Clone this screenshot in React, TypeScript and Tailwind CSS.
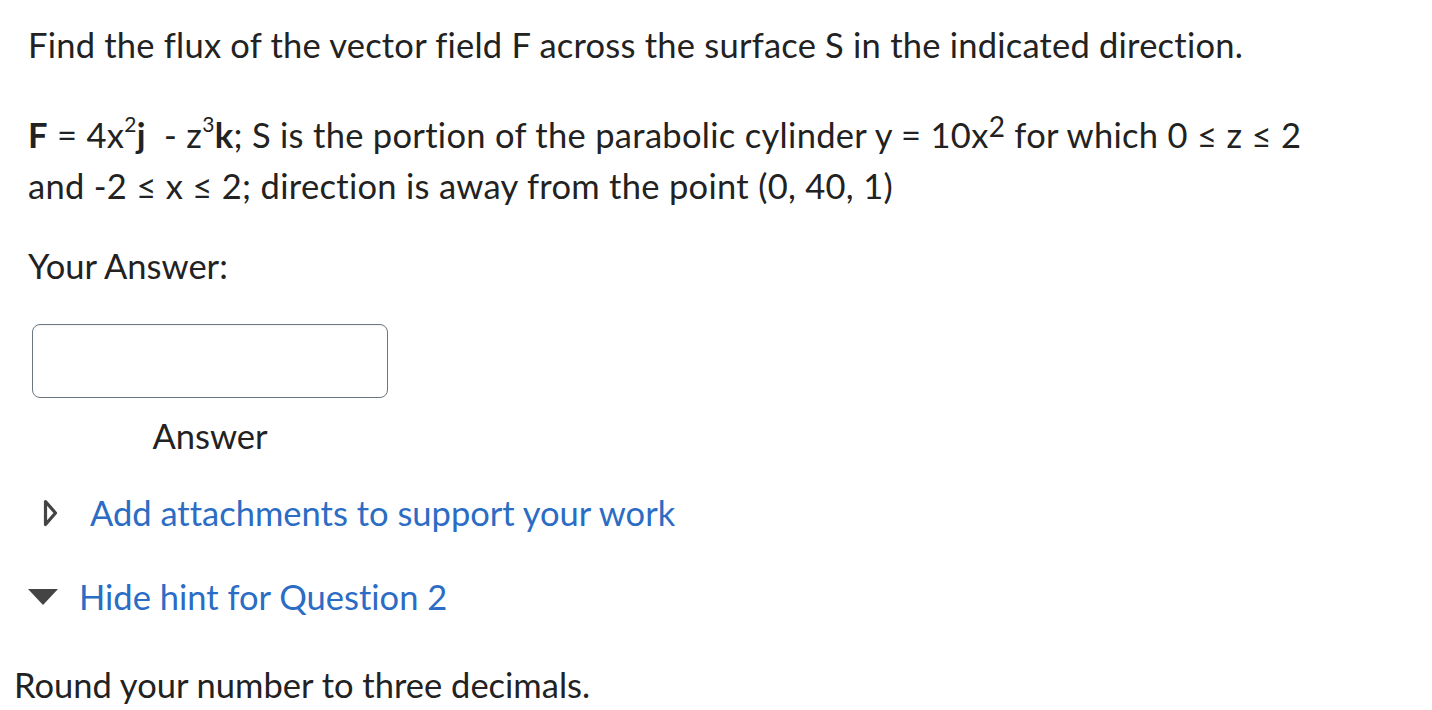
export default function App() {
  return (
    <div className="min-h-[710px] w-[1432px] bg-white font-['Lato',sans-serif] text-[34.5px] text-[#222222] [font-variant-ligatures:none]">
      <div className="pt-[23px] pl-[28px]">
        <p className="leading-[44px] tracking-[0.22px]">
          Find the flux of the vector field F across the surface S in the indicated direction.
        </p>
        <p className="mt-[41.5px] leading-[51px] tracking-[0.3px]">
          <b className="font-bold">F</b> = 4x<sup className="top-[-16px] text-[21px]">2</sup>
          <b className="font-bold">j</b>&nbsp; - z<sup className="top-[-16px] text-[21px]">3</sup>
          <b className="font-bold">k</b>; S is the portion of the parabolic cylinder y = 10x
          <sup className="top-[-11px] text-[28px]">2</sup> for which 0 ≤ z ≤ 2
          <br />
          and -2 ≤ x ≤ 2; direction is away from the point (0, 40, 1)
        </p>
        <p className="mt-[33.5px] leading-[44px]">Your Answer:</p>
        <div className="mt-[36px] ml-[4px] flex w-[356px] flex-col items-center">
          <input
            type="text"
            aria-label="Answer"
            className="h-[74px] w-[356px] rounded-[8px] border border-[#6b7780] bg-white shadow-[inset_0_3px_3px_-2px_rgba(0,0,0,0.06)]"
          />
          <span className="mt-[16px] leading-[44px]">Answer</span>
        </div>
        <div className="mt-[33px] ml-[15px] flex items-center gap-[32px]">
          <svg width="15" height="28" viewBox="0 0 15 28" aria-hidden="true">
            <path d="M2.5 2.5 L12.5 14 L2.5 25.5 Z" fill="none" stroke="#444" strokeWidth="3.2" strokeLinejoin="round" />
          </svg>
          <span className="leading-[44px] text-[#2b6cc4]">Add attachments to support your work</span>
        </div>
        <div className="mt-[40px] ml-[-1px] flex items-center gap-[20px]">
          <svg width="32" height="18" viewBox="0 0 32 18" aria-hidden="true">
            <path d="M1 1 H31 L16 17 Z" fill="#444" />
          </svg>
          <span className="leading-[44px] text-[#2b6cc4]">Hide hint for Question 2</span>
        </div>
      </div>
      <p className="mt-[44px] pl-[14px] leading-[44px]">Round your number to three decimals.</p>
    </div>
  );
}
